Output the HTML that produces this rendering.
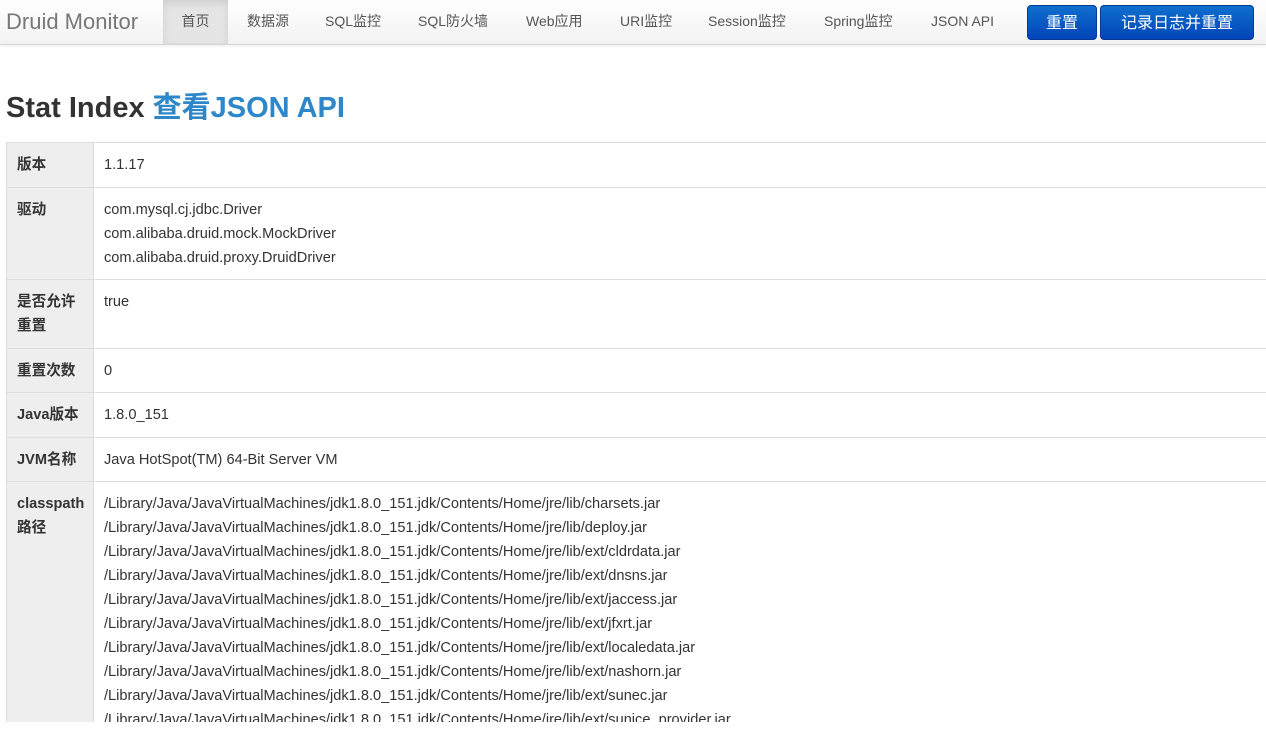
<!DOCTYPE html>
<html><head><meta charset="utf-8"><style>
body{margin:0;width:1266px;height:730px;overflow:hidden;background:#fff;font-family:"Liberation Sans","Noto Sans CJK SC",sans-serif;color:#333}
.nav{position:absolute;left:0;top:0;width:1266px;height:44px;background:linear-gradient(#fff,#f2f2f2);border-bottom:1px solid #d4d4d4;box-shadow:0 1px 4px rgba(0,0,0,.07)}
.brand{position:absolute;left:6px;top:9px;font-size:22px;color:#777;font-weight:300}
.nav a{position:absolute;top:0;height:44px;line-height:43px;font-size:14px;color:#555;text-decoration:none}
.act{background:#e5e5e5;box-shadow:inset 0 3px 8px rgba(0,0,0,.1)}
.btn{position:absolute;top:5px;height:35px;line-height:35px;color:#fff;font-size:16px;text-align:center;border-radius:4px;background:linear-gradient(#0f6fce,#0344b8);border:1px solid #063a92;box-sizing:border-box}
h1{position:absolute;left:6px;top:84px;margin:0;font-size:29px;font-weight:bold;color:#333}
h1 span{color:#2d87c8}
.tbl{position:absolute;left:6px;top:142px;width:1270px;height:579px;overflow:hidden;border-left:1px solid #ddd;border-top:1px solid #ddd}
.row{display:flex;border-bottom:1px solid #ddd}
.k{width:76px;padding:10px 0 9.5px 10px;background:#eee;font-weight:bold;font-size:14.6px;line-height:24px;border-right:1px solid #ddd;flex:none}
.v{padding:10px 10px 9.5px 10px;font-size:14.6px;line-height:24px}
</style></head><body>
<div class="nav">
<div class="brand">Druid Monitor</div>
<a class="act" style="left:163px;width:65px;text-align:center">首页</a>
<a style="left:247px">数据源</a>
<a style="left:325px">SQL监控</a>
<a style="left:418px">SQL防火墙</a>
<a style="left:526px">Web应用</a>
<a style="left:620px">URI监控</a>
<a style="left:708px">Session监控</a>
<a style="left:824px">Spring监控</a>
<a style="left:931px">JSON API</a>
<div class="btn" style="left:1027px;width:70px">重置</div>
<div class="btn" style="left:1100px;width:154px">记录日志并重置</div>
</div>
<h1>Stat Index <span>查看JSON API</span></h1>
<div class="tbl">
<div class="row"><div class="k">版本</div><div class="v">1.1.17</div></div>
<div class="row"><div class="k">驱动</div><div class="v">com.mysql.cj.jdbc.Driver<br>com.alibaba.druid.mock.MockDriver<br>com.alibaba.druid.proxy.DruidDriver</div></div>
<div class="row"><div class="k">是否允许<br>重置</div><div class="v">true</div></div>
<div class="row"><div class="k">重置次数</div><div class="v">0</div></div>
<div class="row"><div class="k">Java版本</div><div class="v">1.8.0_151</div></div>
<div class="row"><div class="k">JVM名称</div><div class="v">Java HotSpot(TM) 64-Bit Server VM</div></div>
<div class="row"><div class="k" style="height:300px">classpath<br>路径</div><div class="v">/Library/Java/JavaVirtualMachines/jdk1.8.0_151.jdk/Contents/Home/jre/lib/charsets.jar<br>/Library/Java/JavaVirtualMachines/jdk1.8.0_151.jdk/Contents/Home/jre/lib/deploy.jar<br>/Library/Java/JavaVirtualMachines/jdk1.8.0_151.jdk/Contents/Home/jre/lib/ext/cldrdata.jar<br>/Library/Java/JavaVirtualMachines/jdk1.8.0_151.jdk/Contents/Home/jre/lib/ext/dnsns.jar<br>/Library/Java/JavaVirtualMachines/jdk1.8.0_151.jdk/Contents/Home/jre/lib/ext/jaccess.jar<br>/Library/Java/JavaVirtualMachines/jdk1.8.0_151.jdk/Contents/Home/jre/lib/ext/jfxrt.jar<br>/Library/Java/JavaVirtualMachines/jdk1.8.0_151.jdk/Contents/Home/jre/lib/ext/localedata.jar<br>/Library/Java/JavaVirtualMachines/jdk1.8.0_151.jdk/Contents/Home/jre/lib/ext/nashorn.jar<br>/Library/Java/JavaVirtualMachines/jdk1.8.0_151.jdk/Contents/Home/jre/lib/ext/sunec.jar<br>/Library/Java/JavaVirtualMachines/jdk1.8.0_151.jdk/Contents/Home/jre/lib/ext/sunjce_provider.jar</div></div>
</div>
</body></html>
